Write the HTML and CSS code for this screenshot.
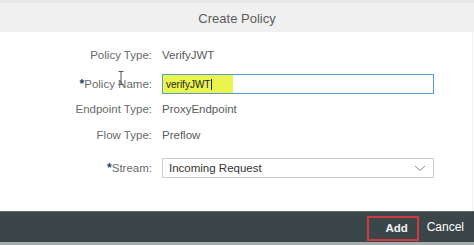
FILE: index.html
```html
<!DOCTYPE html>
<html>
<head>
<meta charset="utf-8">
<link rel="stylesheet" href="styles.css">
</head>
<body>
<div class="dialog">
  <div class="header"><span class="title">Create Policy</span></div>
  <div class="content">
    <div class="form">
      <div class="label">Policy Type:</div>
      <div class="value">VerifyJWT</div>

      <div class="label"><span class="req">*</span>Policy Name:</div>
      <div class="input"><span class="hl">verifyJWT<span class="caret"></span></span></div>

      <div class="label">Endpoint Type:</div>
      <div class="value">ProxyEndpoint</div>

      <div class="label">Flow Type:</div>
      <div class="value">Preflow</div>

      <div class="label"><span class="req">*</span>Stream:</div>
      <div class="select">
        <span class="sel-text">Incoming Request</span>
        <svg class="chev" width="12" height="7" viewBox="0 0 12 7"><path d="M1 1 L6 5.5 L11 1" fill="none" stroke="#8a8a8a" stroke-width="1"/></svg>
      </div>
    </div>
    <svg class="ibeam" width="6" height="14" viewBox="0 0 6 14"><path d="M0.5 0.5 H5.5 M3 0.5 V13.5 M0.5 13.5 H5.5" fill="none" stroke="#555" stroke-width="1"/></svg>
  </div>
  <div class="footer">
    <button class="btn add">Add</button>
    <button class="btn cancel">Cancel</button>
  </div>
  <div class="strip"></div>
</div>
</body>
</html>
```

FILE: styles.css
```css
html, body {
  margin: 0;
  padding: 0;
  background: #ffffff;
}
body {
  width: 474px;
  height: 245px;
  overflow: hidden;
  font-family: "Liberation Sans", Arial, sans-serif;
}
.dialog {
  display: flex;
  flex-direction: column;
  height: 245px;
}
.header {
  height: 29px;
  border-top: 3px solid #e6e6e6;
  background: #f0f0f0;
  display: flex;
  align-items: center;
  justify-content: center;
}
.title {
  font-size: 13px;
  color: #5c5c5c;
  padding-top: 1px;
}
.content {
  flex: 1;
  position: relative;
  border-right: 1px solid #f0f0f0;
  margin-right: 1px;
}
.form {
  display: grid;
  grid-template-columns: 152px 272px;
  grid-template-rows: 26px 31px 19px 33px 34px;
  column-gap: 10px;
  align-items: center;
  padding-top: 10px;
}
.label {
  text-align: right;
  font-size: 11.5px;
  color: #6a6a6a;
}
.req {
  color: #1d3f6e;
  font-weight: bold;
  font-size: 12px;
}
.value {
  font-size: 11.5px;
  color: #5a5a5a;
}
.input {
  box-sizing: border-box;
  height: 20px;
  border: 1px solid #5a9bcf;
  display: flex;
  align-items: stretch;
  margin-top: 1px;
}
.hl {
  background: #eaf44c;
  width: 70px;
  font-size: 10px;
  color: #222222;
  display: flex;
  align-items: center;
  padding-left: 3px;
  box-sizing: border-box;
}
.caret {
  display: inline-block;
  width: 0;
  height: 11px;
  border-left: 1px solid #222;
  margin-left: 1px;
}
.select {
  box-sizing: border-box;
  height: 20px;
  border: 1px solid #cccccc;
  display: flex;
  align-items: center;
  justify-content: space-between;
  padding: 0 7px 0 6px;
}
.sel-text {
  font-size: 11.5px;
  color: #333333;
}
.chev {
  display: block;
}
.ibeam {
  position: absolute;
  left: 118px;
  top: 39px;
}
.footer {
  height: 30px;
  border-top: 1px solid #5f696c;
  background: #3b4649;
  display: flex;
  align-items: center;
  justify-content: flex-end;
  gap: 8px;
  padding-right: 10px;
}
.btn {
  background: transparent;
  border: none;
  color: #ffffff;
  font-family: "Liberation Sans", Arial, sans-serif;
  font-size: 11.5px;
  padding: 0;
  cursor: pointer;
}
.add {
  box-sizing: border-box;
  width: 52px;
  height: 25px;
  border: 2px solid #cf3a40;
  font-weight: bold;
  margin-top: 2px;
  padding-left: 8px;
  color: #f4f4f4;
}
.cancel {
  font-size: 12px;
}
.strip {
  height: 3px;
  background: #a7adae;
}
```
